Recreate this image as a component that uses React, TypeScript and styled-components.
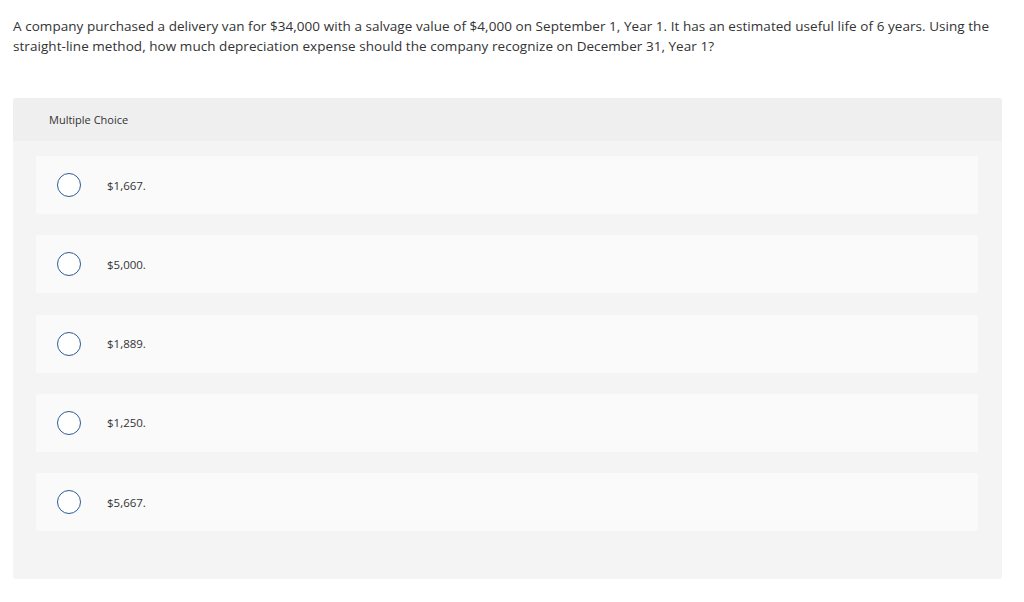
import React from 'react';
import styled, { createGlobalStyle } from 'styled-components';

const GlobalStyle = createGlobalStyle`
  body {
    margin: 0;
    background: #ffffff;
    font-family: 'Open Sans', 'Liberation Sans', sans-serif;
    color: #333333;
  }
`;

const Page = styled.div`
  padding: 16px 10px 0 13px;
`;

const Question = styled.p`
  margin: 0;
  font-size: 13.5px;
  line-height: 20px;
  color: #333333;
  letter-spacing: 0.05px;
`;

const Panel = styled.div`
  margin-top: 42px;
  width: 989px;
  background: #f4f4f4;
  border-radius: 3px;
  padding-bottom: 48px;
`;

const PanelHeader = styled.div`
  height: 43px;
  background: #efefef;
  display: flex;
  align-items: center;
  padding-left: 36px;
  font-size: 11px;
  color: #333333;
  border-radius: 3px 3px 0 0;
`;

const Options = styled.div`
  display: flex;
  flex-direction: column;
  gap: 21.25px;
  padding: 15px 24px 0 23px;
`;

const Option = styled.label`
  height: 58px;
  background: #fafafa;
  border-radius: 2px;
  display: flex;
  align-items: center;
  padding-left: 21px;
  cursor: pointer;
`;

const Radio = styled.span`
  width: 22px;
  height: 22px;
  border: 1.5px solid #2a5d94;
  border-radius: 50%;
  background: #ffffff;
  flex-shrink: 0;
`;

const OptionText = styled.span`
  margin-left: 26px;
  font-size: 11.5px;
  color: #333333;
`;

const choices = ['$1,667.', '$5,000.', '$1,889.', '$1,250.', '$5,667.'];

export default function App() {
  return (
    <>
      <GlobalStyle />
      <Page>
        <Question>
          A company purchased a delivery van for $34,000 with a salvage value of $4,000 on September 1, Year 1. It has an
          estimated useful life of 6 years. Using the straight-line method, how much depreciation expense should the
          company recognize on December 31, Year 1?
        </Question>
        <Panel>
          <PanelHeader>Multiple Choice</PanelHeader>
          <Options>
            {choices.map((c) => (
              <Option key={c}>
                <Radio />
                <OptionText>{c}</OptionText>
              </Option>
            ))}
          </Options>
        </Panel>
      </Page>
    </>
  );
}
